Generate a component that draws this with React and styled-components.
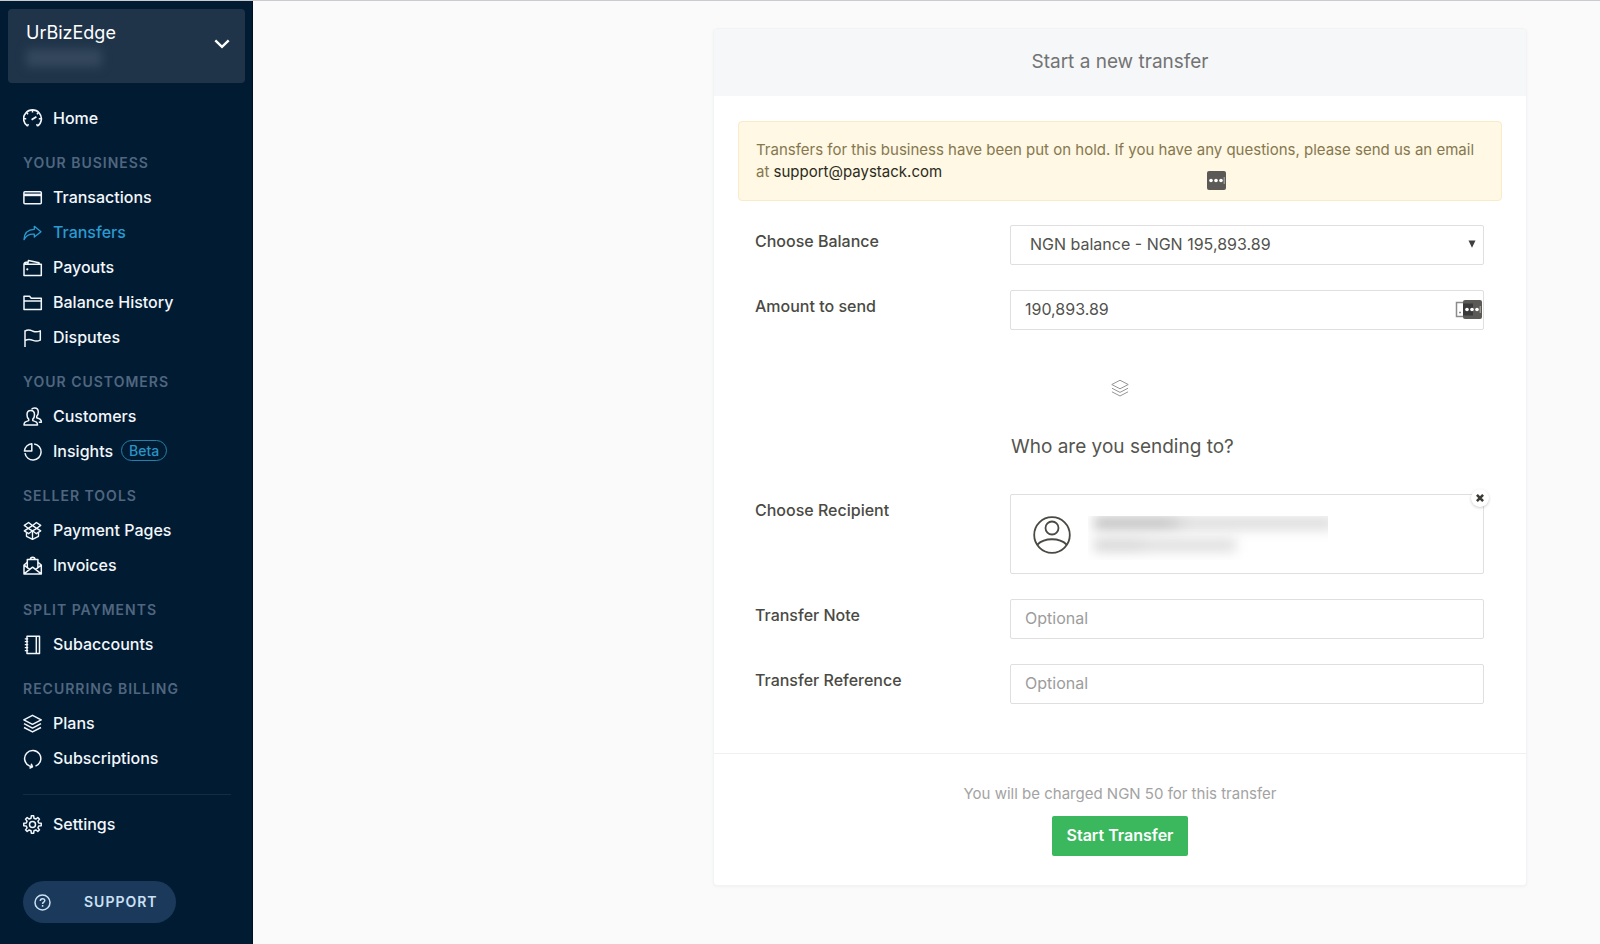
import React, { useState } from 'react';
import styled, { createGlobalStyle, css } from 'styled-components';

const GlobalStyle = createGlobalStyle`
  *, *::before, *::after {
    box-sizing: border-box;
  }
  body {
    margin: 0;
    background: #fafafa;
    font-family: Inter, "Liberation Sans", sans-serif;
    font-size: 16px;
    color: #4a4a44;
  }
  button, input, select {
    font-family: inherit;
  }
`;

const Page = styled.div`
  display: flex;
  min-height: 100vh;
  border-top: 1px solid #c9cbce;
`;

// Sidebar
const Sidebar = styled.aside`
  flex: 0 0 253px;
  padding: 8px 7px 20px 8px;
  background: #011b33;
  border-right: 1px solid #00101f;
`;

const BusinessSwitcher = styled.button`
  display: flex;
  align-items: center;
  justify-content: space-between;
  width: 100%;
  height: 74px;
  padding: 0 15px 4px 18px;
  border: 0;
  border-radius: 4px;
  background: #1f3449;
  color: #fff;
  text-align: left;
  cursor: pointer;
`;

const BusinessName = styled.span`
  display: block;
  margin-bottom: 5px;
  font-size: 18px;
  line-height: 22px;
`;

const HiddenId = styled.span`
  display: block;
  width: 76px;
  height: 18px;
  border-radius: 4px;
  background: #34475d;
  filter: blur(5px);
`;

const Nav = styled.nav`
  padding: 17px 14px 0 15px;
`;

const NavHeading = styled.h2`
  margin: 0;
  padding: 20px 0 8px;
  font-size: 14px;
  font-weight: 600;
  line-height: 16px;
  letter-spacing: 1px;
  text-transform: uppercase;
  color: #50667f;
`;

const NavItem = styled.a`
  display: flex;
  align-items: center;
  gap: 10px;
  height: 35px;
  font-size: 16px;
  font-weight: 500;
  line-height: 20px;
  text-decoration: none;
  color: ${({ $active }) => ($active ? '#2a9bd0' : '#f3f7fb')};

  svg {
    flex: none;
    margin-top: 3px;
  }
`;

const Badge = styled.span`
  padding: 0 7px;
  margin-left: -2px;
  border: 1px solid #2380ac;
  border-radius: 11px;
  font-size: 14px;
  line-height: 19px;
  color: #2a94c8;
`;

const NavDivider = styled.hr`
  margin: 19px 0 11px;
  border: 0;
  border-top: 1px solid #132d46;
`;

const SupportButton = styled.button`
  display: flex;
  align-items: center;
  gap: 33px;
  height: 42px;
  margin: 40px 0 0 15px;
  padding: 0 18px 2px 11px;
  border: 0;
  border-radius: 21px;
  background: #1b3a5b;
  font-size: 14px;
  font-weight: 600;
  letter-spacing: 1px;
  color: #cbe0f5;
  cursor: pointer;

  svg {
    margin-top: 2px;
  }
`;

// Transfer card
const Main = styled.main`
  display: flex;
  flex: 1;
  align-items: flex-start;
  justify-content: flex-end;
  min-width: 0;
  padding: 27px 73px 57px 24px;
`;

const Card = styled.form`
  width: 100%;
  max-width: 814px;
  border: 1px solid #f2f3f4;
  border-radius: 4px;
  background: #fff;
  box-shadow: 0 1px 3px rgba(0, 0, 0, 0.04);
`;

const CardHeader = styled.header`
  padding: 19px 24px 21px;
  background: #f6f7f9;
  text-align: center;
`;

const CardTitle = styled.h1`
  margin: 0;
  font-size: 19px;
  font-weight: 400;
  line-height: 27px;
  color: #737373;
`;

const CardBody = styled.div`
  padding: 25px 24px 24px;
`;

const Notice = styled.div`
  position: relative;
  min-height: 80px;
  margin-bottom: 24px;
  padding: 17px;
  border: 1px solid #f8ebc8;
  border-radius: 4px;
  background: #fef8e4;
  font-size: 15px;
  line-height: 22px;
  color: #86774e;

  a {
    color: #2b2a20;
    text-decoration: none;
  }

  svg {
    position: absolute;
    top: 49px;
    right: 275px;
  }
`;

const Row = styled.div`
  display: grid;
  grid-template-columns: 255px 1fr;
  align-items: start;
  margin: 0 18px 25px 17px;
`;

const labelText = css`
  padding-top: 5px;
  font-size: 16px;
  font-weight: 500;
  line-height: 22px;
  color: #4a4a44;
`;

const FieldLabel = styled.label`
  ${labelText}
`;

const FieldName = styled.span`
  ${labelText}
`;

const Control = styled.div`
  position: relative;
`;

const boxStyle = css`
  display: block;
  width: 100%;
  height: 40px;
  border: 1px solid #dfdfdf;
  border-radius: 2px;
  background: #fff;
  font-size: 16px;
  color: #52524e;
  outline: none;
`;

const TextInput = styled.input`
  ${boxStyle}
  padding: 0 14px 2px;

  &::placeholder {
    color: #9c9c9c;
    opacity: 1;
  }
`;

const Select = styled.select`
  ${boxStyle}
  padding: 0 32px 2px 19px;
  appearance: none;
`;

const SelectArrow = styled.svg`
  position: absolute;
  top: 15px;
  right: 8px;
  pointer-events: none;
`;

const InputBadge = styled.svg`
  position: absolute;
  top: 10px;
  right: 2px;
`;

const StepIcon = styled.div`
  display: flex;
  justify-content: center;
  padding: 24px 0 37px;
`;

const Question = styled.h2`
  margin: 0 18px 35px 273px;
  font-size: 19px;
  font-weight: 400;
  line-height: 24px;
  color: #55554f;
`;

const Recipient = styled.div`
  display: flex;
  gap: 17px;
  height: 80px;
  padding: 21px 22px;
  border: 1px solid #dfdfdf;
  border-radius: 2px;

  svg {
    flex: none;
  }
`;

const HiddenDetails = styled.div`
  display: flex;
  flex-direction: column;
  gap: 8px;
  width: 240px;
  height: 44px;
  padding-left: 6px;
  overflow: hidden;
`;

const HiddenLine = styled.div`
  flex: none;
  width: ${({ $width }) => $width}px;
  height: 14px;
  background: linear-gradient(90deg, ${({ $from }) => $from} 30%, ${({ $to }) => $to} 40%);
  filter: blur(6px);
`;

const RemoveButton = styled.button`
  position: absolute;
  top: -5px;
  right: -5px;
  display: flex;
  align-items: center;
  justify-content: center;
  width: 18px;
  height: 18px;
  padding: 0;
  border: 0;
  border-radius: 50%;
  background: #fff;
  box-shadow: 0 1px 3px rgba(0, 0, 0, 0.2);
  cursor: pointer;
`;

const CardFooter = styled.footer`
  display: flex;
  flex-direction: column;
  align-items: center;
  padding: 29px 24px;
  border-top: 1px solid #f0f0f0;
`;

const Fee = styled.p`
  margin: 0 0 11px;
  font-size: 15px;
  line-height: 22px;
  color: #a3a3a3;
`;

const SubmitButton = styled.button`
  height: 40px;
  padding: 0 15px 2px;
  border: 0;
  border-radius: 2px;
  background: #3bb75e;
  font-size: 16px;
  font-weight: 600;
  color: #fff;
  cursor: pointer;
`;

function Icon({ children }) {
  return (
    <svg
      width="20"
      height="20"
      viewBox="0 0 20 20"
      fill="none"
      stroke="currentColor"
      strokeWidth="1.5"
      strokeLinejoin="round"
      aria-hidden="true"
    >
      {children}
    </svg>
  );
}

// Outline of a cog with sloped teeth around the centre of the icon box
function cogPath(teeth, outer, inner) {
  const points = [];
  const step = (Math.PI * 2) / teeth;
  for (let i = 0; i < teeth; i += 1) {
    [[-0.3, inner], [-0.17, outer], [0.17, outer], [0.3, inner]].forEach(([shift, radius]) => {
      const angle = (i + shift) * step;
      points.push(`${(9.5 + radius * Math.sin(angle)).toFixed(2)} ${(9.5 - radius * Math.cos(angle)).toFixed(2)}`);
    });
  }
  return `M${points.join('L')}Z`;
}

const icons = {
  home: (
    <>
      <path d="M4.6 17.2A8.9 8.9 0 1 1 14.4 17.2" strokeWidth="1.6" />
      <path d="M9.5 1v2.6M3.6 3.8l1.5 1.5M15.4 3.8l-1.5 1.5M.9 9.8h2.3M18.1 9.8h-2.3M4.4 17.2l1-2M14.6 17.2l-1-2" />
      <path d="M8.6 10.7l4.8-3" strokeWidth="1.8" />
    </>
  ),
  card: (
    <>
      <rect x=".9" y="3.7" width="17.4" height="12" rx="1" />
      <path d="M1 6.9h17.2" strokeWidth="2.6" />
    </>
  ),
  share: <path d="M11.3 3.3L18 8.7l-6.7 5.4v-3C6.5 10.7 3.2 12 1 16.6 1.2 10.3 4.7 6.5 11.3 6.3z" strokeWidth="1.3" />,
  wallet: (
    <>
      <path d="M1 6.2h17.3v11.2H1zM1 6.2l3.8-.4L5.4 2.6 16 4.7v1.5M1 6.2c0-1.6.8-2.2 4-2.3" />
      <circle cx="4.3" cy="11.3" r="1.1" fill="currentColor" stroke="none" />
    </>
  ),
  folder: <path d="M1 16.5V3.3h5.6l1.6 1.9h10.1v11.3zM1 8h17.3" />,
  flag: <path d="M2 19V2.2M2 3.2C5.5.8 8 2.4 10 3.2s4.7.9 7.3-.3v9.2c-2.6 1.2-5.3 1.1-7.3.3s-4.5-1.8-8 .2" />,
  users: (
    <>
      <path d="M1 17.9c0-2.7 1.3-3.2 4.7-4.3v-1.5C4.4 11 4 9.6 4 7.7 4 5 5.3 3.6 7.7 3.6s3.8 1.4 3.8 4.1c0 1.9-.5 3.3-1.7 4.4v1.5c3.3 1.1 4.7 1.6 4.7 4.3z" />
      <path d="M8.5 2.4C9.2 1.3 10.3.9 11.6.9c2.4 0 3.7 1.5 3.7 4.1 0 1.9-.4 3.2-1.6 4.3v1.5c3.3 1.1 4.7 1.7 4.7 4.5h-2.6" />
    </>
  ),
  pie: (
    <>
      <path d="M8.8 1.8V9H1.4A8.3 8.3 0 0 1 8.8 1.8z" />
      <path d="M11.2 1.9A8.1 8.1 0 1 1 2 11.2" />
    </>
  ),
  box: (
    <>
      <path
        d="M9.5 4.6L5.6 1.5 1.3 4.4l3.9 2.9zM9.5 4.6l3.9-3.1 4.3 2.9-3.9 2.9zM5.2 7.3L1.3 9.9l4.3 2.8 3.9-2.9zM13.8 7.3l3.9 2.6-4.3 2.8-3.9-2.9z"
        strokeWidth="1.4"
      />
      <path d="M3.5 12v3.3l6 3 6-3V12M9.5 10v8" strokeWidth="1.4" />
    </>
  ),
  invoice: (
    <>
      <path d="M4.3 6.3L1 9v8.9h17.3V9L15 6.3M1.2 9.2l5.3 4.1M18.1 9.2l-5.3 4.1M1.3 17.7l8.3-6.5 8.3 6.5" />
      <path d="M4.3 11.6V3.5h10.6v8.1M7.2 3.5c.2-3 4.7-3 4.9 0" />
    </>
  ),
  notebook: (
    <>
      <path d="M4 1.2h12.5v17.2H4zM13.3 1.2v17.2" />
      <path d="M1.8 3.8h3.4M1.8 6.7h3.4M1.8 9.7h3.4M1.8 12.6h3.4M1.8 15.6h3.4" strokeWidth="1.2" />
    </>
  ),
  layers: (
    <>
      <path d="M9.5 1.3L18.2 5.8 9.5 10.3.8 5.8z" />
      <path d="M1 9.7l8.5 4.4L18 9.7M1 13.5l8.5 4.4 8.5-4.4" />
    </>
  ),
  repeat: (
    <>
      <path d="M12.5 17.1A8.1 8.1 0 1 0 6 16.7l3 1.1" />
      <path d="M8.2 14.8l1.3 3.1-3 1.4" />
    </>
  ),
  cog: (
    <>
      <path d={cogPath(8, 8.8, 6.4)} />
      <circle cx="9.5" cy="9.5" r="3" />
    </>
  ),
};

const home = [{ label: 'Home', icon: 'home' }];

const sections = [
  {
    title: 'Your business',
    items: [
      { label: 'Transactions', icon: 'card' },
      { label: 'Transfers', icon: 'share', active: true },
      { label: 'Payouts', icon: 'wallet' },
      { label: 'Balance History', icon: 'folder' },
      { label: 'Disputes', icon: 'flag' },
    ],
  },
  {
    title: 'Your customers',
    items: [
      { label: 'Customers', icon: 'users' },
      { label: 'Insights', icon: 'pie', badge: 'Beta' },
    ],
  },
  {
    title: 'Seller tools',
    items: [
      { label: 'Payment Pages', icon: 'box' },
      { label: 'Invoices', icon: 'invoice' },
    ],
  },
  {
    title: 'Split payments',
    items: [{ label: 'Subaccounts', icon: 'notebook' }],
  },
  {
    title: 'Recurring billing',
    items: [
      { label: 'Plans', icon: 'layers' },
      { label: 'Subscriptions', icon: 'repeat' },
    ],
  },
];

const settings = [{ label: 'Settings', icon: 'cog' }];

function NavLinks({ items }) {
  return items.map(({ label, icon, active, badge }) => (
    <NavItem key={label} href="#" $active={active} aria-current={active ? 'page' : undefined}>
      <Icon>{icons[icon]}</Icon>
      {label}
      {badge && <Badge>{badge}</Badge>}
    </NavItem>
  ));
}

function PasswordDots({ overlap }) {
  return (
    <>
      <rect width="19" height="19" rx="2" fill="#5b5a56" />
      {overlap && <path d="M0 3.5h10v12H0" fill="#3a3a3a" />}
      <circle cx="4" cy="9.5" r="1.8" fill="#fff" />
      <circle cx="9" cy="9.5" r="1.8" fill="#fff" />
      <circle cx="14" cy="9.5" r="1.8" fill="#fff" />
      <path d="M17.2 6v7" stroke="#b5b5b0" />
    </>
  );
}

function AppSidebar() {
  return (
    <Sidebar>
      <BusinessSwitcher type="button" aria-label="Switch business">
        <span>
          <BusinessName>UrBizEdge</BusinessName>
          <HiddenId />
        </span>
        <svg width="16" height="10" viewBox="0 0 16 10" fill="none" stroke="#fff" strokeWidth="2.4" aria-hidden="true">
          <path d="M1.3 1.3L8 7.8l6.7-6.5" />
        </svg>
      </BusinessSwitcher>
      <Nav>
        <NavLinks items={home} />
        {sections.map((section) => (
          <React.Fragment key={section.title}>
            <NavHeading>{section.title}</NavHeading>
            <NavLinks items={section.items} />
          </React.Fragment>
        ))}
        <NavDivider />
        <NavLinks items={settings} />
      </Nav>
      <SupportButton type="button">
        <svg width="17" height="17" viewBox="0 0 17 17" fill="none" stroke="currentColor" strokeWidth="1.5" aria-hidden="true">
          <circle cx="8.5" cy="8.5" r="7.5" />
          <path d="M6.3 6.9c0-3 4.5-2.8 4.5-.3 0 1.6-2.2 1.5-2.2 3.3M8.6 11v1.7" />
        </svg>
        SUPPORT
      </SupportButton>
    </Sidebar>
  );
}

function App() {
  const [amount, setAmount] = useState('190,893.89');

  return (
    <>
      <GlobalStyle />
      <Page>
        <AppSidebar />
        <Main>
          <Card onSubmit={(e) => e.preventDefault()}>
            <CardHeader>
              <CardTitle>Start a new transfer</CardTitle>
            </CardHeader>
            <CardBody>
              <Notice>
                Transfers for this business have been put on hold. If you have any questions, please send us an email
                at <a href="mailto:support@paystack.com">support@paystack.com</a>
                <svg width="19" height="19" viewBox="0 0 19 19" aria-hidden="true">
                  <PasswordDots />
                </svg>
              </Notice>
              <Row>
                <FieldLabel htmlFor="balance">Choose Balance</FieldLabel>
                <Control>
                  <Select id="balance">
                    <option>NGN balance - NGN 195,893.89</option>
                  </Select>
                  <SelectArrow width="8" height="8" viewBox="0 0 8 8" aria-hidden="true">
                    <path d="M.5.5h7L4 7.8z" fill="#3f3f3f" />
                  </SelectArrow>
                </Control>
              </Row>
              <Row>
                <FieldLabel htmlFor="amount">Amount to send</FieldLabel>
                <Control>
                  <TextInput id="amount" value={amount} onChange={(e) => setAmount(e.target.value)} />
                  <InputBadge width="27" height="19" viewBox="0 0 27 19" aria-hidden="true">
                    <path
                      d="M9 2.5H1.5v14H9M4 12.5h2"
                      fill="none"
                      stroke="#8b8b8b"
                      strokeWidth="1.5"
                    />
                    <g transform="translate(8 0)">
                      <PasswordDots overlap />
                    </g>
                  </InputBadge>
                </Control>
              </Row>
              <StepIcon>
                <svg width="18" height="19" viewBox="0 0 19 20" fill="none" stroke="#8f8f8f" aria-hidden="true">
                  {icons.layers}
                </svg>
              </StepIcon>
              <Question>Who are you sending to?</Question>
              <Row>
                <FieldName>Choose Recipient</FieldName>
                <Control>
                  <Recipient>
                    <svg width="38" height="38" viewBox="0 0 38 38" fill="none" stroke="#4a4a44" strokeWidth="1.8" aria-hidden="true">
                      <circle cx="19" cy="19" r="17.8" />
                      <circle cx="19" cy="12" r="6.5" />
                      <path d="M4.5 28.5c7-7 22-7 29 0" />
                    </svg>
                    <HiddenDetails>
                      <HiddenLine $width={240} $from="#c4c4c4" $to="#dedede" />
                      <HiddenLine $width={142} $from="#d8d8d8" $to="#e0e0e0" />
                    </HiddenDetails>
                  </Recipient>
                  <RemoveButton type="button" aria-label="Remove recipient">
                    <svg width="8" height="8" viewBox="0 0 8 8" stroke="#3c3c36" strokeWidth="2.6" aria-hidden="true">
                      <path d="M.9.9l6.2 6.2M7.1.9L.9 7.1" />
                    </svg>
                  </RemoveButton>
                </Control>
              </Row>
              <Row>
                <FieldLabel htmlFor="note">Transfer Note</FieldLabel>
                <TextInput id="note" placeholder="Optional" />
              </Row>
              <Row>
                <FieldLabel htmlFor="reference">Transfer Reference</FieldLabel>
                <TextInput id="reference" placeholder="Optional" />
              </Row>
            </CardBody>
            <CardFooter>
              <Fee>You will be charged NGN 50 for this transfer</Fee>
              <SubmitButton type="submit">Start Transfer</SubmitButton>
            </CardFooter>
          </Card>
        </Main>
      </Page>
    </>
  );
}

export default App;
